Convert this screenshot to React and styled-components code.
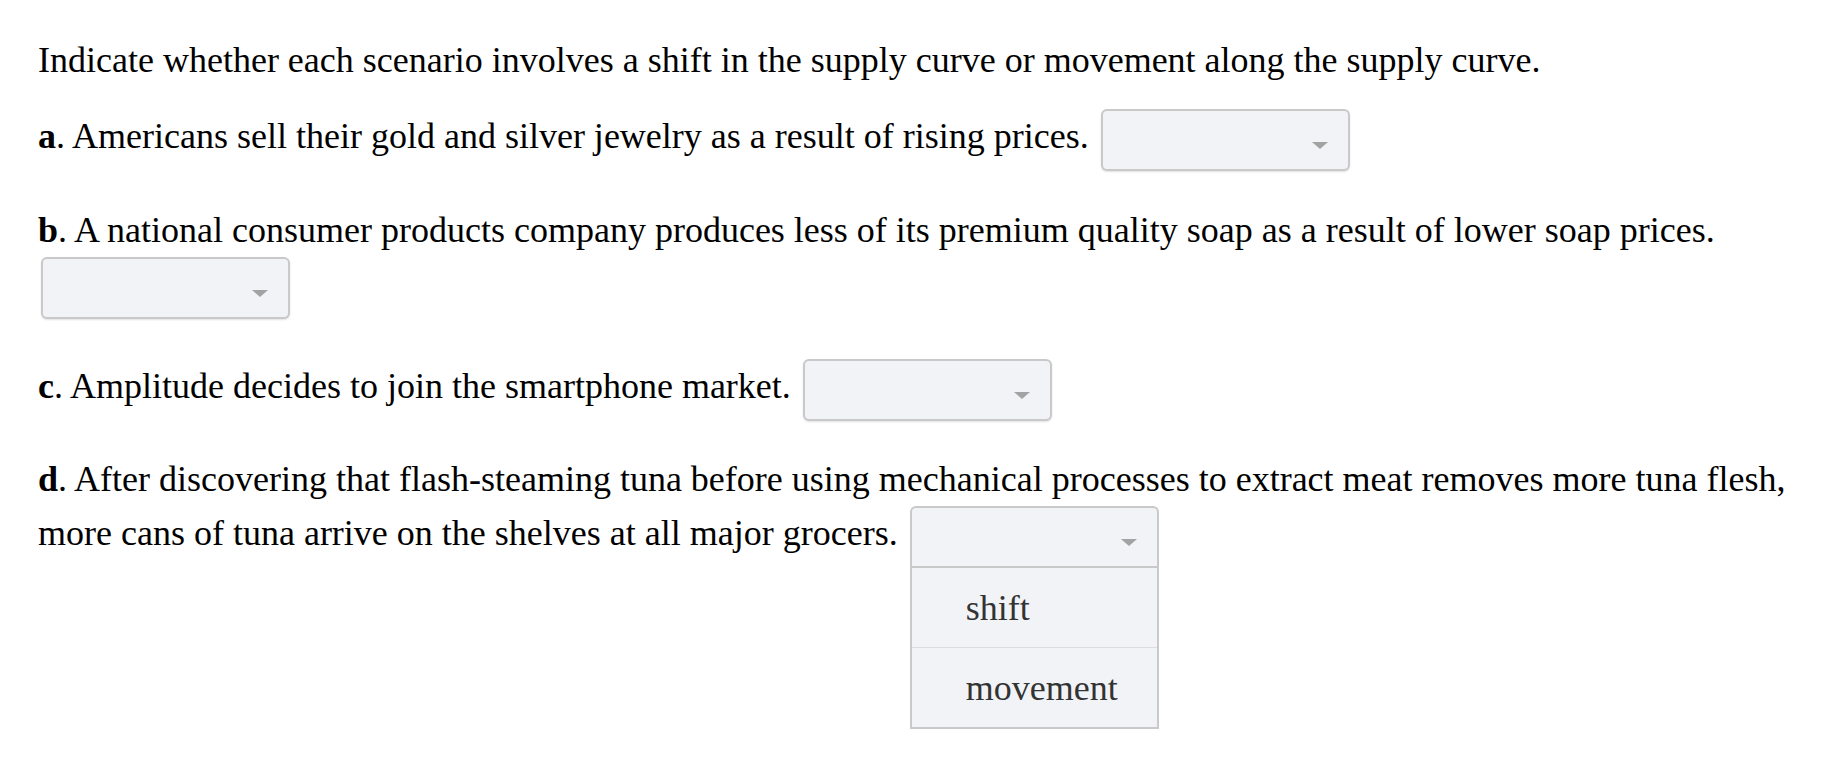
import React from 'react';
import styled, { createGlobalStyle } from 'styled-components';

const GlobalStyle = createGlobalStyle`
  body {
    margin: 0;
    background: #fff;
    font-family: "Liberation Serif", "Times New Roman", serif;
    color: #000;
  }
`;

const Page = styled.div`
  box-sizing: border-box;
  min-height: 100vh;
  padding: 33px 38px;
  font-size: 36px;
  line-height: 54px;
`;

const Prompt = styled.p`
  margin: 0 0 22px;
`;

const Question = styled.p`
  margin: 0 0 ${props => props.$space}px;
`;

const Letter = styled.b`
  font-weight: 700;
`;

const SelectBox = styled.span`
  position: relative;
  display: inline-block;
  box-sizing: border-box;
  width: 249px;
  height: 62px;
  margin-left: 3px;
  vertical-align: middle;
  background-color: #f2f3f7;
  border: 2px solid #c9c9c9;
  border-radius: ${props => (props.$open ? '6px 6px 0 0' : '6px')};
  box-shadow: ${props => (props.$open ? 'none' : '0 1px 2px rgba(0, 0, 0, 0.12)')};
`;

const Caret = styled.span`
  position: absolute;
  right: 20px;
  top: 31px;
  width: 0;
  height: 0;
  border-left: 8px solid transparent;
  border-right: 8px solid transparent;
  border-top: 7px solid #a3a3a3;
`;

const Menu = styled.span`
  position: absolute;
  top: 100%;
  left: -2px;
  right: -2px;
  display: flex;
  flex-direction: column;
  background-color: #f2f3f7;
  border: 2px solid #c9c9c9;
  z-index: 2;
`;

const Option = styled.span`
  display: block;
  height: 79px;
  line-height: 80px;
  padding-left: 54px;
  color: #333;
  border-top: ${props => (props.$first ? 'none' : '1px solid #dcdcdc')};
`;

const Select = ({ open, options = [] }) => (
  <SelectBox $open={open}>
    <Caret />
    {open && (
      <Menu>
        {options.map((opt, i) => (
          <Option key={opt} $first={i === 0}>
            {opt}
          </Option>
        ))}
      </Menu>
    )}
  </SelectBox>
);

export default function App() {
  return (
    <>
      <GlobalStyle />
      <Page>
        <Prompt>
          Indicate whether each scenario involves a shift in the supply curve or movement along the supply curve.
        </Prompt>
        <Question $space={32}>
          <Letter>a</Letter>. Americans sell their gold and silver jewelry as a result of rising prices. <Select />
        </Question>
        <Question $space={40}>
          <Letter>b</Letter>. A national consumer products company produces less of its premium quality soap as a result
          of lower soap prices. <Select />
        </Question>
        <Question $space={31}>
          <Letter>c</Letter>. Amplitude decides to join the smartphone market. <Select />
        </Question>
        <Question $space={0}>
          <Letter>d</Letter>. After discovering that flash-steaming tuna before using mechanical processes to extract
          meat removes more tuna flesh, more cans of tuna arrive on the shelves at all major grocers.{' '}
          <Select open options={['shift', 'movement']} />
        </Question>
      </Page>
    </>
  );
}
